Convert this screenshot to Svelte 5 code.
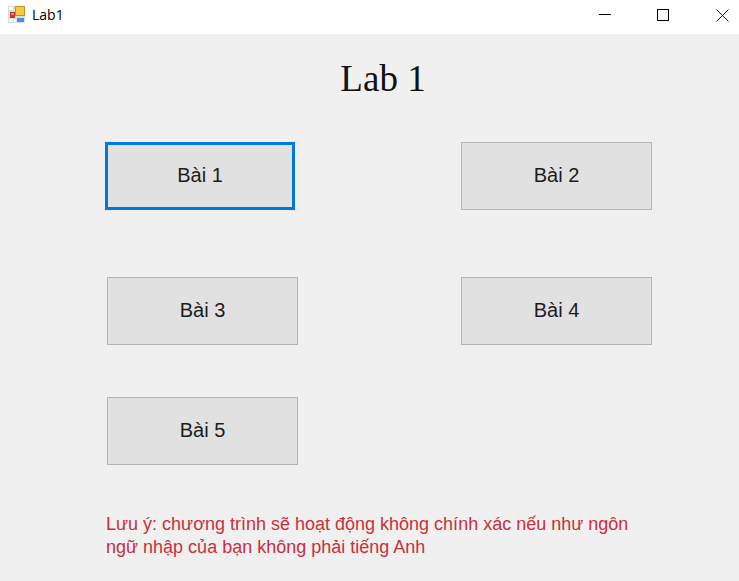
<script>
  const rows = [
    { cls: "first", items: ["Bài 1", "Bài 2"] },
    { cls: "second", items: ["Bài 3", "Bài 4"] },
    { cls: "third", items: ["Bài 5"] },
  ];
</script>

<div class="window">
  <header class="titlebar">
    <svg class="app-icon" width="17" height="18" viewBox="0 0 17 18">
      <rect x="0" y="1" width="17" height="17" fill="#dcdcdc" />
      <rect x="1" y="14" width="4" height="3" fill="#fafafa" />
      <rect x="6" y="14" width="2" height="3" fill="#fafafa" />
      <rect x="1" y="2" width="4" height="3" fill="#fafafa" />
      <rect x="2" y="7" width="5" height="6" fill="#c0392b" />
      <rect x="3" y="8" width="3" height="2" fill="#e9897c" />
      <rect x="7" y="1" width="10" height="10" fill="#c4921a" />
      <rect x="8" y="2" width="8" height="8" fill="#f8c840" />
      <rect x="9" y="13" width="7" height="4" fill="#4a8fe0" />
    </svg>
    <span class="app-name">Lab1</span>
    <div class="controls">
      <svg width="13" height="13" viewBox="0 0 13 13"><path d="M1 5.5H13" stroke="#000" fill="none" /></svg>
      <svg width="13" height="13" viewBox="0 0 13 13"><rect x="0.5" y="0.5" width="11" height="11" stroke="#000" fill="none" /></svg>
      <svg width="13" height="13" viewBox="0 0 13 13"><path d="M0.5 0.5L12.5 12.5M12.5 0.5L0.5 12.5" stroke="#000" fill="none" stroke-width="0.9" /></svg>
    </div>
  </header>

  <main class="content">
    <h1>Lab 1</h1>
    {#each rows as row}
      <div class="row {row.cls}">
        {#each row.items as label}
          <button class:focused={label === "Bài 1"}>{label}</button>
        {/each}
      </div>
    {/each}
    <p class="note">
      Lưu ý: chương trình sẽ hoạt động không chính xác nếu như ngôn<br />
      ngữ nhập của bạn không phải tiếng Anh
    </p>
  </main>
</div>

<style>
  :global(body) {
    margin: 0;
    background: #f0f0f0;
  }

  .window {
    width: 739px;
    height: 581px;
    overflow: hidden;
    display: flex;
    flex-direction: column;
    font-family: "Liberation Sans", Arial, sans-serif;
  }

  .titlebar {
    height: 34px;
    flex: none;
    background: #fff;
    display: flex;
    align-items: center;
    padding-left: 8px;
  }

  .app-icon {
    margin-top: -6px;
  }

  .app-name {
    margin-left: 7px;
    margin-top: -5px;
    font-family: "Open Sans", "Liberation Sans", sans-serif;
    font-size: 14px;
    color: #000;
  }

  .controls {
    margin-left: auto;
    display: flex;
    gap: 46px;
    padding-right: 10px;
    margin-top: -3px;
  }

  .controls svg {
    display: block;
  }

  .content {
    flex: 1;
    background: #f0f0f0;
  }

  h1 {
    margin: 24px 0 0;
    height: 42px;
    line-height: 42px;
    text-align: center;
    padding-left: 27px;
    font-family: "Liberation Serif", "Times New Roman", serif;
    font-weight: normal;
    font-size: 37px;
    color: #111;
  }

  .row {
    display: flex;
    justify-content: space-between;
    width: 545px;
    margin-left: 107px;
  }

  .row.first {
    margin-top: 42px;
  }

  .row.second {
    margin-top: 67px;
  }

  .row.third {
    margin-top: 52px;
  }

  button {
    width: 191px;
    height: 68px;
    box-sizing: border-box;
    background: #e1e1e1;
    border: 1px solid #b4b4b4;
    border-radius: 0;
    padding: 0 0 2px;
    font-family: "Liberation Sans", Arial, sans-serif;
    font-size: 20px;
    color: #1c1c1c;
  }

  button.focused {
    width: 190px;
    margin-left: -2px;
    border: 3px solid #0078d7;
  }

  .note {
    margin: 48px 0 0 106px;
    font-size: 18px;
    line-height: 23px;
    color: #c8303a;
  }
</style>
